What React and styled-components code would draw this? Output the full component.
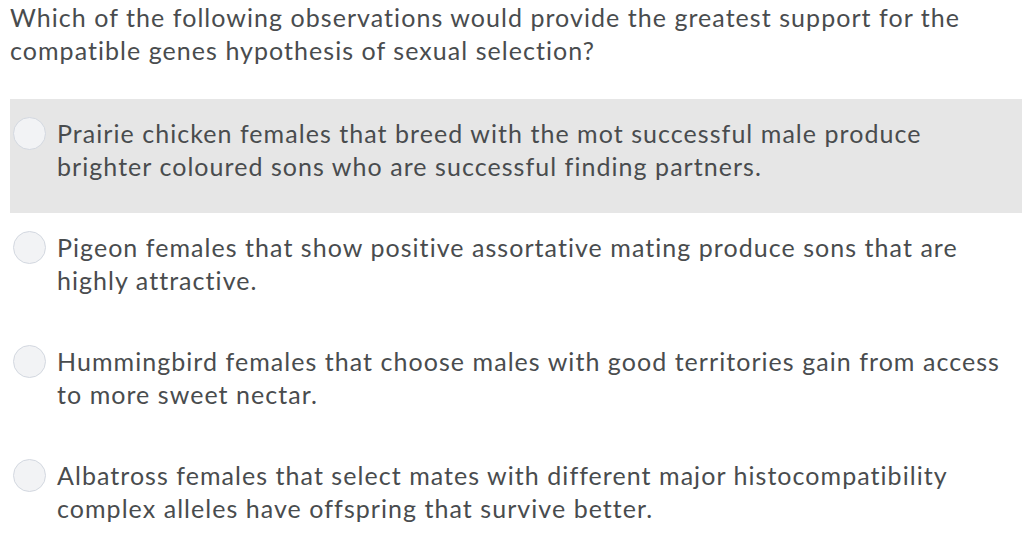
import React from "react";
import styled, { createGlobalStyle } from "styled-components";

const options = [
  {
    id: "a",
    text: "Prairie chicken females that breed with the mot successful male produce brighter coloured sons who are successful finding partners.",
    hovered: true,
  },
  {
    id: "b",
    text: "Pigeon females that show positive assortative mating produce sons that are highly attractive.",
  },
  {
    id: "c",
    text: "Hummingbird females that choose males with good territories gain from access to more sweet nectar.",
  },
  {
    id: "d",
    text: "Albatross females that select mates with different major histocompatibility complex alleles have offspring that survive better.",
  },
];

const App = () => {
  return (
    <>
      <GlobalStyle />
      <QuestionWrapper>
        <Prompt>
          Which of the following observations would provide the greatest support for the
          compatible genes hypothesis of sexual selection?
        </Prompt>
        <OptionList>
          {options.map((option) => (
            <OptionRow key={option.id} $hovered={option.hovered}>
              <Radio type="radio" name="answer" value={option.id} />
              <OptionText>{option.text}</OptionText>
            </OptionRow>
          ))}
        </OptionList>
      </QuestionWrapper>
    </>
  );
};

const GlobalStyle = createGlobalStyle`
  body {
    margin: 0;
    background: #ffffff;
    font-family: Lato, "Open Sans", sans-serif;
    color: #494c4e;
    font-variant-ligatures: none;
  }
`;

const QuestionWrapper = styled.div`
  width: 1024px;
  box-sizing: border-box;
  padding: 1px 2px 0 10px;
`;

const Prompt = styled.p`
  margin: 0;
  font-size: 25px;
  line-height: 33px;
  letter-spacing: 1.05px;
  color: #494c4e;
`;

const OptionList = styled.div`
  display: flex;
  flex-direction: column;
  margin-top: 32px;
`;

const OptionRow = styled.label`
  display: flex;
  align-items: flex-start;
  gap: 11px;
  height: 114px;
  box-sizing: border-box;
  padding: 18px 6px 0 3px;
  background: ${(p) => (p.$hovered ? "#e6e6e6" : "transparent")};
  cursor: pointer;
`;

const Radio = styled.input`
  appearance: none;
  flex: none;
  width: 33px;
  height: 33px;
  margin: 0;
  border-radius: 50%;
  border: 1px solid #d3d8e0;
  background: #f2f3f5;
  box-sizing: border-box;
  cursor: pointer;
`;

const OptionText = styled.span`
  flex: 1;
  font-size: 25px;
  line-height: 33px;
  letter-spacing: 1.05px;
  color: #494c4e;
`;

export default App;
